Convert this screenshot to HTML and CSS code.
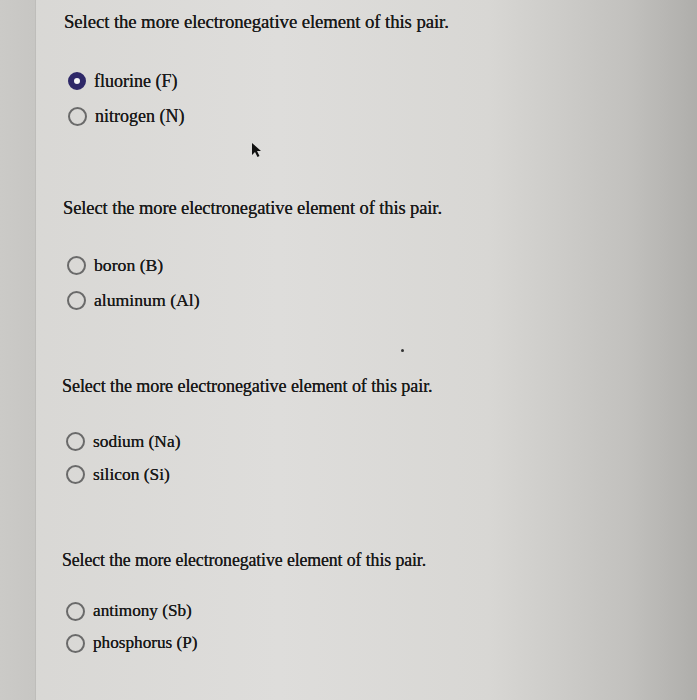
FILE: index.html
```html
<!DOCTYPE html>
<html>
<head>
<meta charset="utf-8">
<link rel="stylesheet" href="styles.css">
</head>
<body>
<div class="screen">
  <div class="sidebar"></div>
  <main class="content">
    <section class="question q1">
      <p class="prompt">Select the more electronegative element of this pair.</p>
      <ul class="options">
        <li class="option"><span class="radio checked"></span><span class="label">fluorine (F)</span></li>
        <li class="option"><span class="radio"></span><span class="label">nitrogen (N)</span></li>
      </ul>
    </section>
    <section class="question q2">
      <p class="prompt">Select the more electronegative element of this pair.</p>
      <ul class="options">
        <li class="option"><span class="radio"></span><span class="label">boron (B)</span></li>
        <li class="option"><span class="radio"></span><span class="label">aluminum (Al)</span></li>
      </ul>
    </section>
    <section class="question q3">
      <p class="prompt">Select the more electronegative element of this pair.</p>
      <ul class="options">
        <li class="option"><span class="radio"></span><span class="label">sodium (Na)</span></li>
        <li class="option"><span class="radio"></span><span class="label">silicon (Si)</span></li>
      </ul>
    </section>
    <section class="question q4">
      <p class="prompt">Select the more electronegative element of this pair.</p>
      <ul class="options">
        <li class="option"><span class="radio"></span><span class="label">antimony (Sb)</span></li>
        <li class="option"><span class="radio"></span><span class="label">phosphorus (P)</span></li>
      </ul>
    </section>
  </main>
  <svg class="cursor" width="12" height="16" viewBox="0 0 12 16"><path d="M1 1 L1 13 L4 10 L6.5 15 L8.5 14 L6 9 L10 9 Z" fill="#111"/></svg>
  <span class="dot"></span>
</div>
</body>
</html>
```
FILE: styles.css
```css
html, body {
  margin: 0;
  padding: 0;
}
body {
  width: 697px;
  height: 700px;
  overflow: hidden;
  font-family: "Liberation Serif", "Times New Roman", serif;
  color: #1a1a1a;
}
.screen {
  position: relative;
  display: flex;
  width: 697px;
  height: 700px;
  background: linear-gradient(90deg, #d8d7d4 0%, #dedddb 40%, #d8d7d4 70%, #c2c1be 90%, #afaeab 100%);
}
.sidebar {
  width: 35px;
  flex: none;
  background: linear-gradient(90deg, #cbcac7, #c7c6c3);
  border-right: 1px solid #bebdba;
}
.content {
  flex: 1;
  padding: 12px 0 0 28px;
}
.question {
  margin: 0;
}
.prompt {
  margin: 0;
  font-size: 18.8px;
  line-height: 20px;
  letter-spacing: -0.1px;
  text-shadow: 0 0 0.5px #1a1a1a;
}
.options {
  list-style: none;
  margin: 39px 0 0 4px;
  padding: 0;
  display: flex;
  flex-direction: column;
  gap: 15px;
}
.option {
  display: flex;
  align-items: center;
  gap: 8px;
  font-size: 18px;
  line-height: 20px;
  text-shadow: 0 0 0.5px #1a1a1a;
}
.radio {
  width: 15px;
  height: 15px;
  border: 2px solid #6a6a6a;
  border-radius: 50%;
  flex: none;
  box-sizing: content-box;
}
.radio.checked {
  width: 6px;
  height: 6px;
  border: 6.5px solid #2e2868;
  background: #f4f4f6;
}
.q2 { margin-top: 72px; margin-left: -1px; }
.q2 .prompt { font-size: 18.5px; }
.q2 .options { margin-top: 37px; }
.q2 .option { font-size: 17.7px; }
.q3 { margin-top: 66px; margin-left: -2px; }
.q3 .prompt { font-size: 18.1px; }
.q3 .options { margin-top: 35px; gap: 13px; }
.q3 .option { font-size: 17.4px; }
.q4 { margin-top: 66px; margin-left: -2px; }
.q4 .prompt { font-size: 17.8px; }
.q4 .options { margin-top: 31px; gap: 12px; }
.q4 .option { font-size: 17.2px; }
.cursor {
  position: absolute;
  left: 251px;
  top: 142px;
}
.dot {
  position: absolute;
  left: 401px;
  top: 349px;
  width: 3px;
  height: 3px;
  border-radius: 50%;
  background: #333;
}
```
